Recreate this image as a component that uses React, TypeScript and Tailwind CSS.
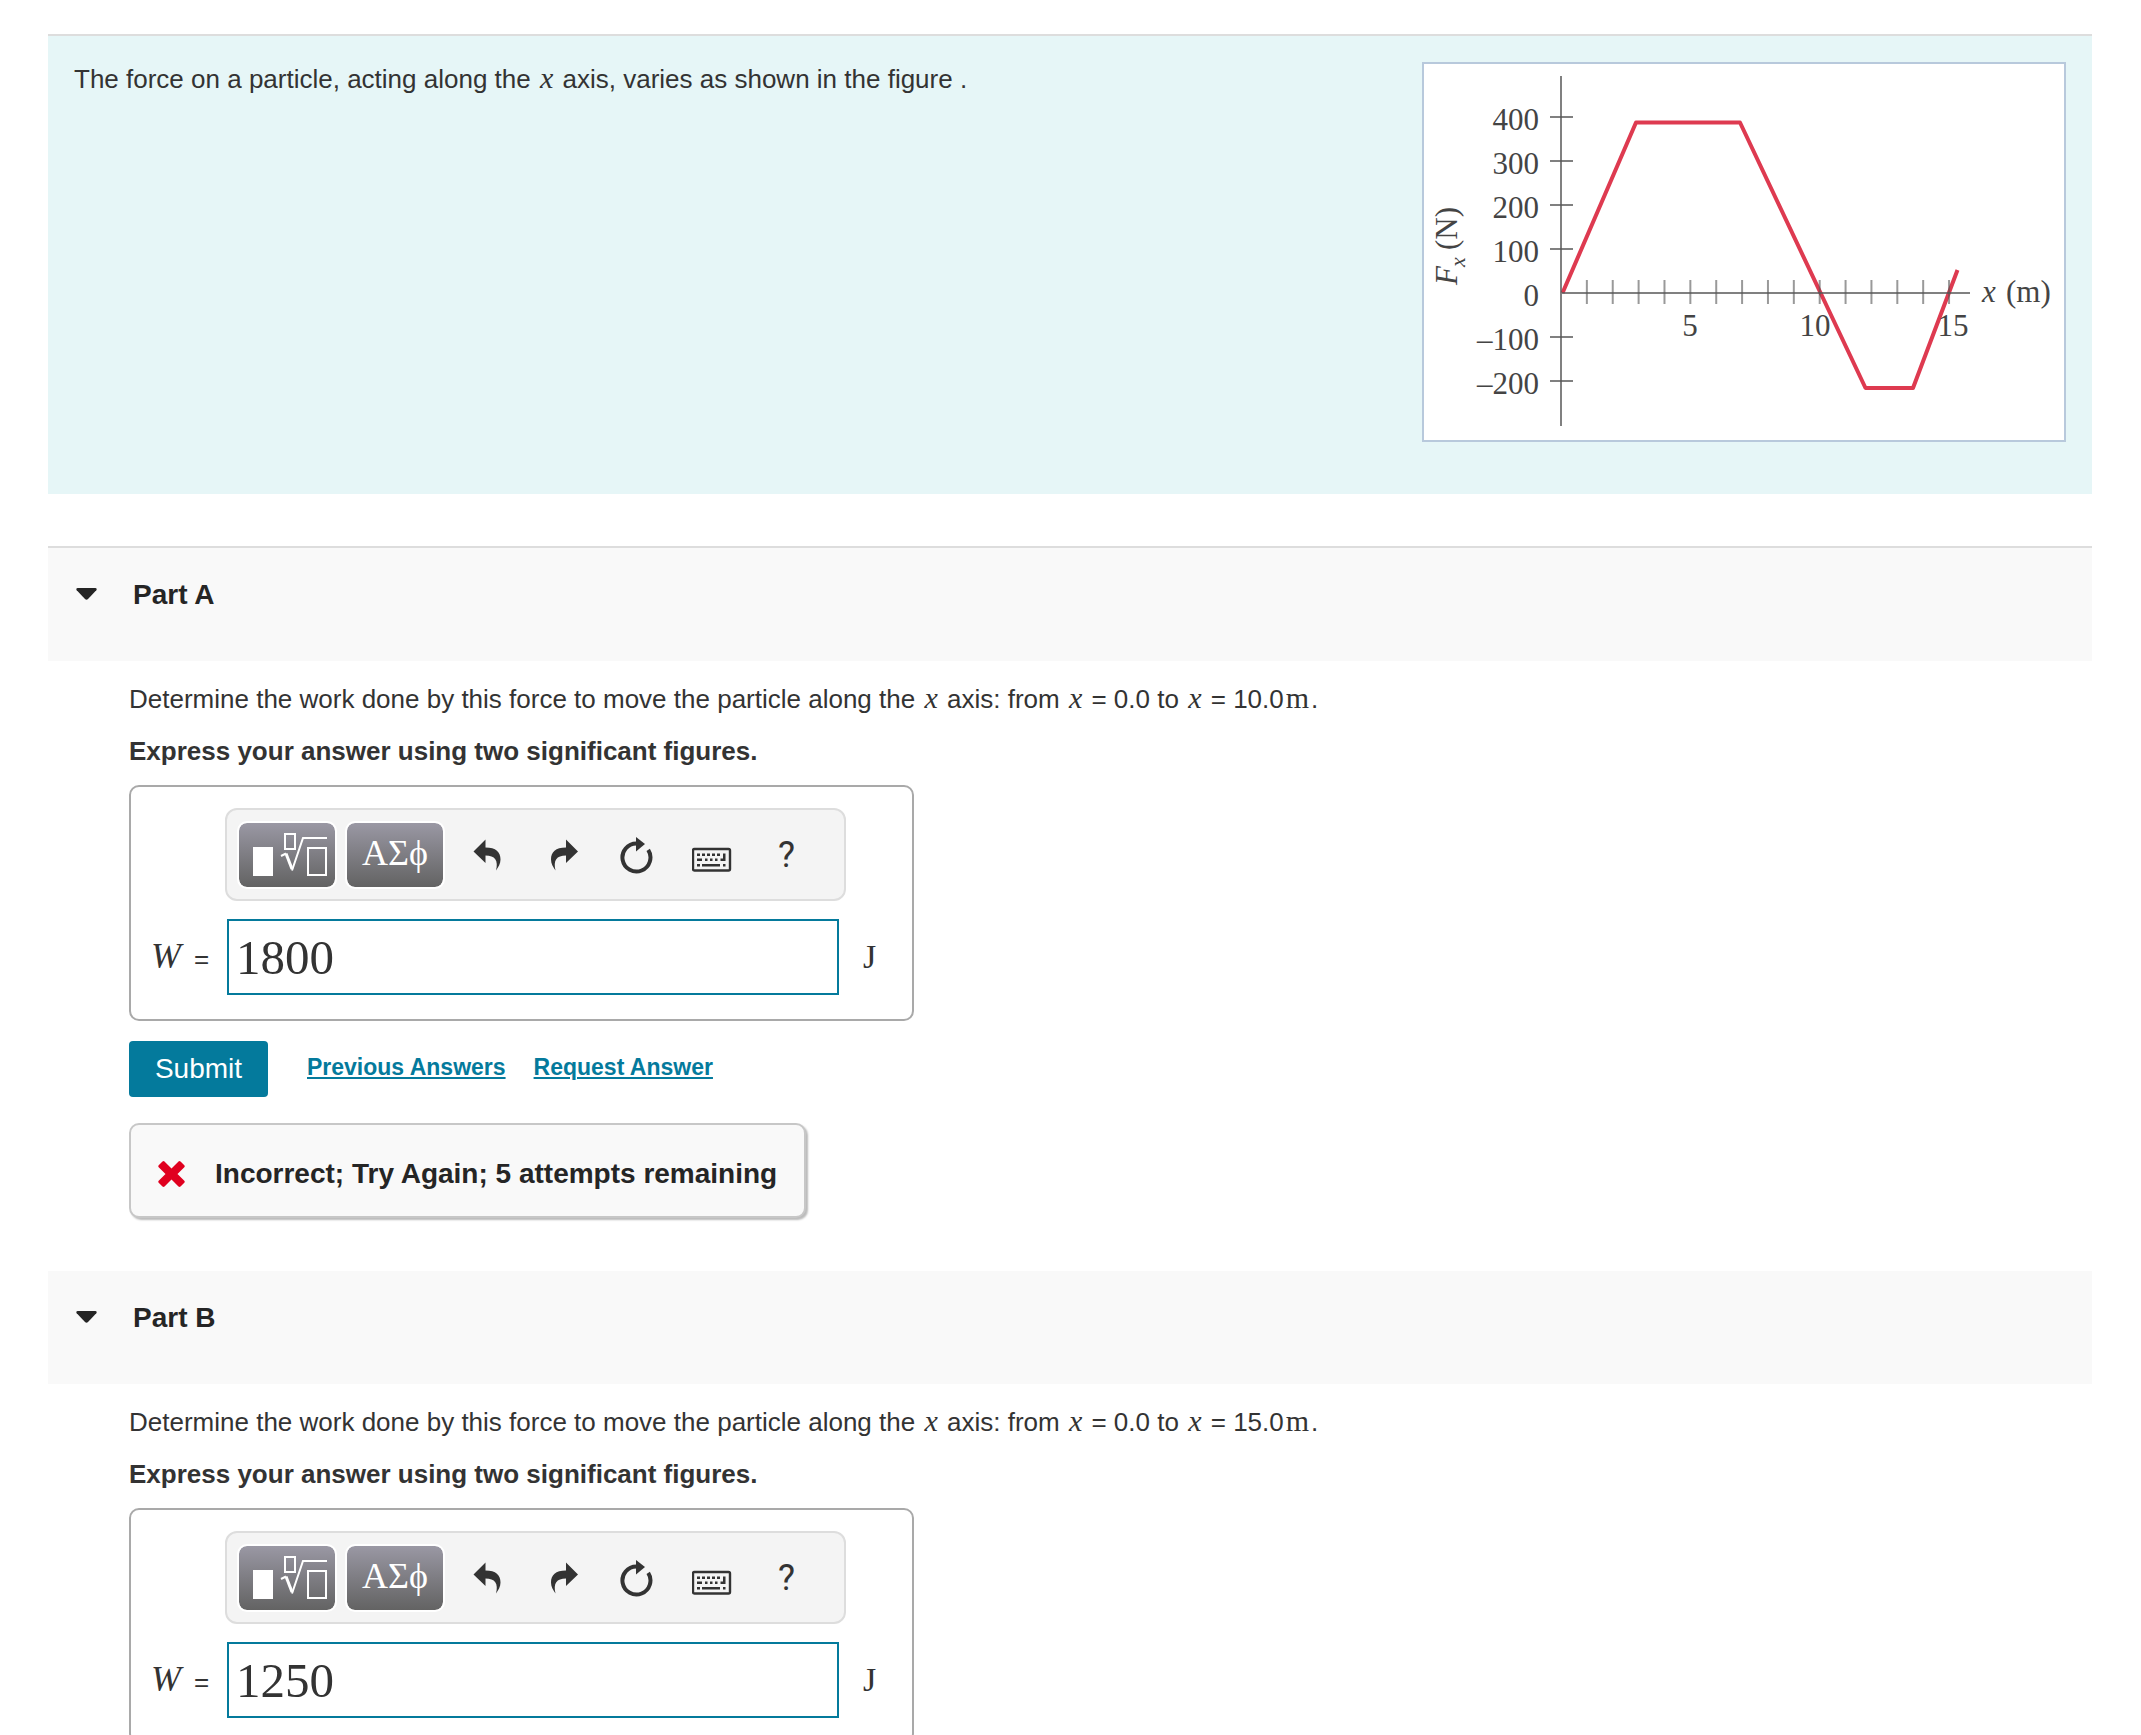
import { useState } from "react";

type Part = {
  id: string;
  title: string;
  end: string;
  answer: string;
  feedback?: string;
};

const parts: Part[] = [
  {
    id: "a",
    title: "Part A",
    end: "10.0",
    answer: "1800",
    feedback: "Incorrect; Try Again; 5 attempts remaining",
  },
  { id: "b", title: "Part B", end: "15.0", answer: "1250" },
];

const yLabels = ["400", "300", "200", "100", "0", "–100", "–200"];

function MathVar({ children }: { children: string }) {
  return (
    <i className="px-[2px] font-['Liberation_Serif',serif] text-[30px] leading-none">{children}</i>
  );
}

function ForceGraph() {
  return (
    <svg
      viewBox="0 0 640 376"
      role="img"
      aria-label="Graph of force against position"
      className="block w-full font-['Liberation_Serif',serif] text-[31px]"
      fill="#444"
    >
      {/* Force curve */}
      <path
        d="M138.500 229 212 58.500H316L441.500 324H489L533.500 206"
        fill="none"
        stroke="#de3a50"
        strokeWidth="4"
        strokeLinejoin="round"
      />

      {/* Axes */}
      <g stroke="#555" strokeOpacity="0.75" strokeWidth="2">
        <path d="M137 12V362M137 229H546" />
        {[53, 97, 141, 185, 273, 317].map((y) => (
          <path key={y} d={`M126 ${y}H149`} />
        ))}
        {Array.from({ length: 15 }, (_, i) => (
          <path key={i} d={`M${137 + (i + 1) * 25.87} 216V240`} strokeOpacity="0.6" />
        ))}
      </g>

      {/* Labels */}
      {yLabels.map((label, i) => (
        <text key={label} x="115" y={66 + i * 44} textAnchor="end">
          {label}
        </text>
      ))}
      <text x="266" y="272" textAnchor="middle">5</text>
      <text x="391" y="272" textAnchor="middle">10</text>
      <text x="529" y="272" textAnchor="middle">15</text>
      <text x="558" y="238" fontStyle="italic">x</text>
      <text x="582" y="238">(m)</text>
      <g transform="translate(33 221) rotate(-90)">
        <text x="0" y="0" fontStyle="italic">F</text>
        <text x="18" y="8" fontStyle="italic" fontSize="22">x</text>
        <text x="35" y="0">(N)</text>
      </g>
    </svg>
  );
}

function TemplatesIcon() {
  return (
    <svg viewBox="0 0 96 64" className="w-24 h-16" fill="none" stroke="#fff" strokeWidth="2">
      <rect x="14" y="24" width="20" height="29" fill="#fff" stroke="none" />
      <rect x="46" y="11" width="10" height="15" />
      <path d="M42 33 47 30.500" />
      <path d="M47 30.500 53 46" strokeWidth="3" />
      <path d="M53 47.500 64 15H88" />
      <rect x="69" y="25" width="18" height="27" />
    </svg>
  );
}

function UndoIcon() {
  return (
    <svg viewBox="0 0 40 40" className="w-10 h-10" fill="#333">
      <path d="M6.500 16.500 18.500 4.500V12.500C29 12.500 33.500 17 33.500 24.500C33.500 28.500 31.500 32 29 35.500C31.500 25.500 28 20.500 18.500 20.500V28Z" />
    </svg>
  );
}

function RedoIcon() {
  return (
    <svg viewBox="0 0 40 40" className="w-10 h-10" fill="#333">
      <path d="M36 16.500 24 4.500V12.500C13.500 12.500 9 17 9 24.500C9 28.500 11 32 13.500 35.500C11 25.500 14.500 20.500 24 20.500V28Z" />
    </svg>
  );
}

function ResetIcon() {
  return (
    <svg viewBox="0 0 40 40" className="w-10 h-10">
      <path
        d="M19.500 8.500A14 14 0 1 0 31.200 14.900"
        fill="none"
        stroke="#333"
        strokeWidth="4"
      />
      <path d="M19 2 28 9 19 16.500Z" fill="#333" />
    </svg>
  );
}

function KeyboardIcon() {
  return (
    <svg viewBox="0 0 40 40" className="w-10 h-10" fill="#333">
      <rect x="1" y="14" width="37" height="21.500" rx="1.500" fill="none" stroke="#333" strokeWidth="2.400" />
      <path d="M5 18.500h3v2.500h-3zM10 18.500h3v2.500h-3zM15 18.500h3v2.500h-3zM20 18.500h3v2.500h-3zM25 18.500h3v2.500h-3z" />
      <path d="M5 23.500h5v2.500h-5zM13 23.500h2.500v2.500h-2.500zM18 23.500h2.500v2.500h-2.500zM23 23.500h2.500v2.500h-2.500z" />
      <path d="M31 18.500h2.500v7.500h-5V23.500h2.500z" />
      <path d="M5 29h3v2.500h-3zM10 29h18v2.500h-18zM31 29h2.500v2.500h-2.500z" />
    </svg>
  );
}

function WrongIcon() {
  return (
    <svg viewBox="0 0 27 26" className="w-[27px] h-[26px] shrink-0" fill="#e0001f">
      <path d="M6.500.500 13.500 7.500 20.500.500Q21.500-.300 22.500.500L26.300 4.300Q27.200 5.200 26.300 6.200L19.500 13 26.300 19.800Q27.200 20.800 26.300 21.700L22.500 25.500Q21.500 26.300 20.500 25.500L13.500 18.500 6.500 25.500Q5.500 26.300 4.500 25.500L.700 21.700Q-.200 20.800.700 19.800L7.500 13 .700 6.200Q-.200 5.200.700 4.300L4.500.500Q5.500-.300 6.500.500Z" />
    </svg>
  );
}

const darkButton =
  "flex items-center justify-center w-[100px] h-[68px] border-2 border-white rounded-[10px] bg-linear-to-b from-[#9a98a4] to-[#636363] bg-clip-padding";
const iconButton = "flex items-center justify-center w-[75px] h-16";

function Toolbar() {
  return (
    <div
      role="toolbar"
      className="ml-[94px] flex items-center w-[621px] h-[93px] pl-[10px] rounded-xl border-2 border-[#ddd] bg-[#f4f4f4]"
    >
      <div className="flex gap-2">
        <button type="button" aria-label="Templates" className={darkButton}>
          <TemplatesIcon />
        </button>
        <button
          type="button"
          className={`${darkButton} pb-1 font-['Liberation_Serif',serif] text-[36px] leading-none text-white`}
        >
          ΑΣϕ
        </button>
      </div>
      <div className="flex ml-1">
        <button type="button" aria-label="Undo" className={iconButton}>
          <UndoIcon />
        </button>
        <button type="button" aria-label="Redo" className={iconButton}>
          <RedoIcon />
        </button>
        <button type="button" aria-label="Reset" className={iconButton}>
          <ResetIcon />
        </button>
        <button type="button" aria-label="Keyboard shortcuts" className={iconButton}>
          <KeyboardIcon />
        </button>
        <button
          type="button"
          className={`${iconButton} font-[Roboto,sans-serif] text-[36px] leading-none text-[#333]`}
        >
          ?
        </button>
      </div>
    </div>
  );
}

function PartSection({ part, first }: { part: Part; first: boolean }) {
  const [open, setOpen] = useState(true);
  const [answer, setAnswer] = useState(part.answer);

  return (
    <section>
      {/* Header */}
      <h2 className={first ? "bg-[#f9f9f9] border-t-2 border-[#ddd]" : "bg-[#f9f9f9]"}>
        <button
          type="button"
          aria-expanded={open}
          onClick={() => setOpen(!open)}
          className="flex items-center gap-9 w-full pt-[29px] pb-12 pl-7 text-[28px] leading-9 font-bold text-[#252525]"
        >
          <svg viewBox="0 0 21 14" className="w-[21px] h-[14px]" fill="currentColor">
            <path d="M1.500 0H19.500Q21.500.500 20.300 2.200L12 11Q10.500 12.400 9 11L.700 2.200Q-.500.500 1.500 0Z" />
          </svg>
          {part.title}
        </button>
      </h2>

      {open && (
        <div className="pt-[21px] pl-[81px] pb-[53px]">
          <p>
            Determine the work done by this force to move the particle along the{" "}
            <MathVar>x</MathVar> axis: from <MathVar>x</MathVar> = 0.0 to <MathVar>x</MathVar> ={" "}
            {part.end}
            <span className="px-[2px] font-['Liberation_Serif',serif] text-[30px] leading-none">m</span>.
          </p>
          <p className="mt-[18px] font-bold">Express your answer using two significant figures.</p>

          {/* Answer box */}
          <div className="mt-[17px] w-[785px] pt-[21px] pb-6 rounded-[10px] border-2 border-[#a9a9a9]">
            <Toolbar />
            <div className="flex items-center mt-[18px]">
              <label
                htmlFor={`answer-${part.id}`}
                className="flex items-baseline gap-[13px] w-24 pl-5"
              >
                <i className="font-['Liberation_Serif',serif] text-[36px] leading-none">W</i>
                <span>=</span>
              </label>
              <input
                id={`answer-${part.id}`}
                type="text"
                value={answer}
                onChange={(e) => setAnswer(e.target.value)}
                className="w-[612px] h-[76px] px-[7px] border-2 border-[#047a9c] bg-white font-['Liberation_Serif',serif] text-[49px] outline-none"
              />
              <span className="ml-6 font-['Liberation_Serif',serif] text-[34px] leading-none">J</span>
            </div>
          </div>

          {/* Result of the last attempt */}
          {part.feedback && (
            <>
              <div className="flex items-center mt-5">
                <button
                  type="button"
                  className="w-[139px] h-14 rounded bg-[#047a9c] text-[28px] text-white"
                >
                  Submit
                </button>
                <div className="flex gap-7 ml-[39px] pb-1 text-[23px] font-bold text-[#047a9c]">
                  <a href="#previous" className="underline decoration-2 underline-offset-2">
                    Previous Answers
                  </a>
                  <a href="#request" className="underline decoration-2 underline-offset-2">
                    Request Answer
                  </a>
                </div>
              </div>
              <div className="flex items-center gap-[30px] w-fit mt-[26px] pt-[31px] pb-6 px-[27px] rounded-[10px] border-2 border-[#c7c7c7] bg-[#f9f9f9] shadow-[2px_2px_2px_#bbb] text-[28px] leading-9 font-bold text-[#252525]">
                <WrongIcon />
                {part.feedback}
              </div>
            </>
          )}
        </div>
      )}
    </section>
  );
}

export default function App() {
  return (
    <main className="min-h-screen bg-white pl-12 pr-[49px] pt-[34px] font-['Liberation_Sans',Arial,sans-serif] text-[26px] leading-[34px] text-[#333]">
      {/* Problem statement */}
      <section className="flex items-start justify-between mb-[52px] px-[26px] pt-[26px] pb-[52px] border-t-2 border-[#ddd] bg-[#e6f6f7]">
        <p>
          The force on a particle, acting along the <MathVar>x</MathVar> axis, varies as shown in
          the figure .
        </p>
        <figure className="w-[644px] shrink-0 border-2 border-[#b8c9dc] bg-white">
          <ForceGraph />
        </figure>
      </section>

      {parts.map((part, i) => (
        <PartSection key={part.id} part={part} first={i === 0} />
      ))}
    </main>
  );
}
